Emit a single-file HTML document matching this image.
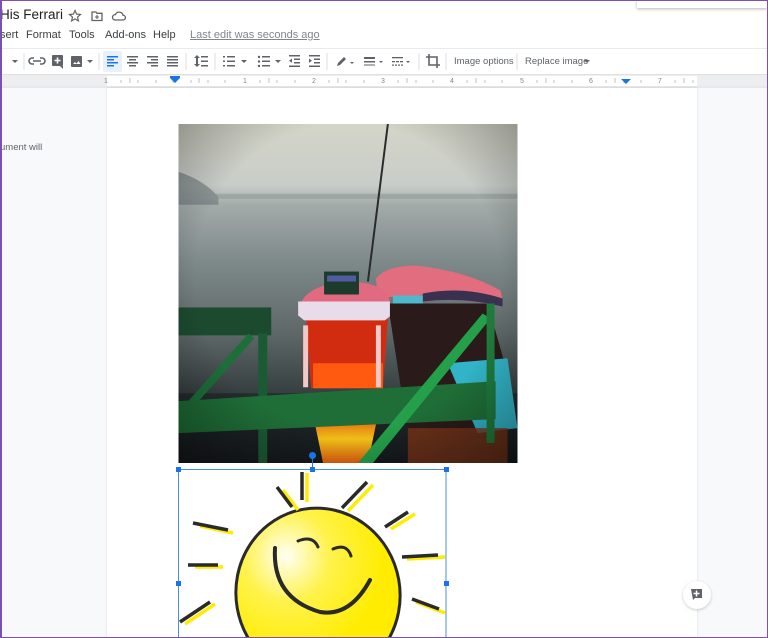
<!DOCTYPE html>
<html><head><meta charset="utf-8"><style>
*{margin:0;padding:0;box-sizing:border-box}
html,body{width:768px;height:638px;overflow:hidden}
body{background:#f8f9fa;font-family:"Liberation Sans",Arial,sans-serif;position:relative}
.abs{position:absolute}
.t{color:#3c4043;font-size:11px}
</style></head><body>
<div class="abs" style="left:0;top:0;width:768px;height:48px;background:#fff"></div>
<div class="abs" style="left:0;top:7px;font-size:13.5px;color:#202124;white-space:nowrap">His Ferrari</div>
<svg class="abs" style="left:68px;top:9px" width="60" height="14" viewBox="0 0 60 14">
<path d="M7 1.5l1.6 3.6 3.9.4-3 2.6.9 3.8L7 9.9 3.6 11.9l.9-3.8-3-2.6 3.9-.4z" fill="none" stroke="#5f6368" stroke-width="1.2"/>
<path d="M24 3h4l1 1.3h5v7.2H24z" fill="none" stroke="#5f6368" stroke-width="1.3"/><path d="M29 6v4M27 8h4" stroke="#5f6368" stroke-width="1.1"/>
<path d="M47 11h8a2.4 2.4 0 0 0 0-4.8 4 4 0 0 0-7.6-.6A2.7 2.7 0 0 0 47 11z" fill="none" stroke="#5f6368" stroke-width="1.3"/>
</svg>
<div class="abs t" style="left:0;top:29px;font-size:11px">
<span style="position:absolute;left:0">sert</span><span style="position:absolute;left:26px">Format</span><span style="position:absolute;left:69px">Tools</span><span style="position:absolute;left:105px;white-space:nowrap">Add-ons</span><span style="position:absolute;left:153px">Help</span>
<span style="position:absolute;left:190px;white-space:nowrap;color:#80868b;text-decoration:underline">Last edit was seconds ago</span></div>
<div class="abs" style="left:637px;top:0;width:130px;height:8px;background:#fff;box-shadow:0 1px 3px rgba(0,0,0,.3)"></div>
<div class="abs" style="left:0;top:48px;width:768px;height:27px;background:#fff;border-top:1px solid #e8eaed;border-bottom:1px solid #e0e0e0"></div>
<svg class="abs" style="left:0;top:49px" width="620" height="25" viewBox="0 0 620 25" fill="#5f6368" stroke="none">
<path d="M12 11l3 3 3-3z"/>
<line x1="24" y1="4" x2="24" y2="21" stroke="#dadce0"/>
<path d="M34 9h-2a3 3 0 0 0 0 6h2M40 9h2a3 3 0 0 1 0 6h-2M33 12h8" fill="none" stroke="#5f6368" stroke-width="1.6"/>
<rect x="52" y="6" width="11" height="11" rx="1"/><path d="M57.5 8.5v6M54.5 11.5h6" stroke="#fff" stroke-width="1.6"/><path d="M60 17l3 3v-3z"/>
<rect x="71" y="7" width="11" height="11" rx="1"/><path d="M73 15l2-2 1.5 1.5 2-2.5 2 3z" fill="#fff"/><path d="M87 11l3 3 3-3z"/>
<line x1="99" y1="4" x2="99" y2="21" stroke="#dadce0"/>
<rect x="103" y="2" width="19" height="21" rx="2" fill="#e8f0fe"/>
<g fill="#1a73e8"><rect x="107" y="7" width="11" height="1.5"/><rect x="107" y="10" width="7" height="1.5"/><rect x="107" y="13" width="11" height="1.5"/><rect x="107" y="16" width="7" height="1.5"/></g>
<rect x="127" y="7" width="11" height="1.5"/><rect x="129" y="10" width="7" height="1.5"/><rect x="127" y="13" width="11" height="1.5"/><rect x="129" y="16" width="7" height="1.5"/>
<rect x="147" y="7" width="11" height="1.5"/><rect x="151" y="10" width="7" height="1.5"/><rect x="147" y="13" width="11" height="1.5"/><rect x="151" y="16" width="7" height="1.5"/>
<rect x="167" y="7" width="11" height="1.5"/><rect x="167" y="10" width="11" height="1.5"/><rect x="167" y="13" width="11" height="1.5"/><rect x="167" y="16" width="11" height="1.5"/>
<line x1="186" y1="4" x2="186" y2="21" stroke="#dadce0"/>
<path d="M197 6l-3 3h2v6h-2l3 3 3-3h-2V9h2z"/><rect x="201" y="7" width="7" height="1.5"/><rect x="201" y="11.5" width="7" height="1.5"/><rect x="201" y="16" width="7" height="1.5"/>
<line x1="215" y1="4" x2="215" y2="21" stroke="#dadce0"/>
<rect x="223" y="7" width="2" height="1.5"/><rect x="223" y="11.5" width="2" height="1.5"/><rect x="223" y="16" width="2" height="1.5"/><rect x="227" y="7" width="8" height="1.5"/><rect x="227" y="11.5" width="8" height="1.5"/><rect x="227" y="16" width="8" height="1.5"/>
<path d="M241 11l3 3 3-3z"/>
<circle cx="259" cy="8" r="1.2"/><circle cx="259" cy="12.5" r="1.2"/><circle cx="259" cy="17" r="1.2"/><rect x="262" y="7" width="8" height="1.5"/><rect x="262" y="11.5" width="8" height="1.5"/><rect x="262" y="16" width="8" height="1.5"/>
<path d="M275 11l3 3 3-3z"/>
<rect x="289" y="6" width="11" height="1.5"/><rect x="294" y="9.5" width="6" height="1.5"/><rect x="294" y="13" width="6" height="1.5"/><rect x="289" y="16.5" width="11" height="1.5"/><path d="M292 9.5l-3 2.2 3 2.2z"/>
<rect x="309" y="6" width="11" height="1.5"/><rect x="314" y="9.5" width="6" height="1.5"/><rect x="314" y="13" width="6" height="1.5"/><rect x="309" y="16.5" width="11" height="1.5"/><path d="M309 9.5l3 2.2-3 2.2z"/>
<line x1="327" y1="4" x2="327" y2="21" stroke="#dadce0"/>
<path d="M337 17l1-3 6-6 2 2-6 6z"/><path d="M350 13l2 2 2-2z"/>
<rect x="364" y="8" width="11" height="2"/><rect x="364" y="12" width="11" height="1.5"/><rect x="364" y="15.5" width="11" height="1"/><path d="M379 12l2 2 2-2z"/>
<rect x="392" y="8" width="11" height="1.3"/><rect x="392" y="12" width="3" height="1.3"/><rect x="396" y="12" width="3" height="1.3"/><rect x="400" y="12" width="3" height="1.3"/><rect x="392" y="15.5" width="2" height="1.2"/><rect x="395" y="15.5" width="2" height="1.2"/><rect x="398" y="15.5" width="2" height="1.2"/><rect x="401" y="15.5" width="2" height="1.2"/><path d="M406 12l2 2 2-2z"/>
<line x1="419" y1="4" x2="419" y2="21" stroke="#dadce0"/>
<path d="M429 5v11h11M426 8h11v11" fill="none" stroke="#5f6368" stroke-width="1.6"/>
<line x1="446" y1="4" x2="446" y2="21" stroke="#dadce0"/>
<line x1="517" y1="4" x2="517" y2="21" stroke="#dadce0"/>
<path d="M584 11l3 3 3-3z"/>
</svg>
<div class="abs" style="left:454px;top:56px;font-size:9.5px;color:#5f6368;white-space:nowrap">Image options</div>
<div class="abs" style="left:525px;top:56px;font-size:9.5px;color:#5f6368;white-space:nowrap">Replace image</div>
<div class="abs" style="left:0;top:75px;width:768px;height:11px;background:#eceef0"></div>
<div class="abs" style="left:107px;top:76px;width:590px;height:10px;background:#fff"></div>
<div class="abs" style="left:0;top:86px;width:768px;height:2px;background:#e6e8eb"></div>
<svg class="abs" style="left:100px;top:76px" width="600" height="10" viewBox="0 0 600 10" font-family="Liberation Sans" font-size="7" fill="#80868b">
<text x="4" y="7">1</text><text x="143" y="7">1</text><text x="212" y="7">2</text><text x="281" y="7">3</text><text x="350" y="7">4</text><text x="420" y="7">5</text><text x="489" y="7">6</text><text x="558" y="7">7</text>
<g stroke="#bdc1c6" stroke-width="1">
<path d="M21 4v3M38 4v3M56 4v3M73 4v3M91 4v3M108 4v3M125 4v3M160 4v3M177 4v3M195 4v3M229 4v3M246 4v3M264 4v3M298 4v3M316 4v3M333 4v3M367 4v3M385 4v3M402 4v3M437 4v3M454 4v3M472 4v3M506 4v3M524 4v3M541 4v3M575 4v3M593 4v3"/>
<path d="M30 2v5M99 2v5M169 2v5M238 2v5M307 2v5M376 2v5M446 2v5M515 2v5M584 2v5"/>
</g>
<path d="M70 2h10l-5 5z" fill="#1a73e8"/><rect x="70" y="0" width="10" height="2" fill="#1a73e8"/>
<path d="M521 3h10l-5 5z" fill="#1a73e8"/>
</svg>
<div class="abs" style="left:0;top:142px;font-size:9.5px;color:#5f6368;white-space:nowrap">ument will</div>
<div class="abs" style="left:107px;top:88px;width:590px;height:550px;background:#fff;box-shadow:0 0 2px rgba(0,0,0,.15)"></div>
<svg class="abs" style="left:178px;top:124px" width="340" height="339" viewBox="0 0 340 340">
<defs>
<linearGradient id="sky" x1="0" y1="0" x2="0" y2="1">
<stop offset="0" stop-color="#d5d5c8"/><stop offset=".18" stop-color="#c8cdc8"/><stop offset=".24" stop-color="#a3aba9"/><stop offset=".4" stop-color="#7f8a8b"/><stop offset=".62" stop-color="#5d6767"/><stop offset=".85" stop-color="#2a3234"/><stop offset="1" stop-color="#1a1e20"/></linearGradient>
<radialGradient id="vig" cx=".5" cy=".45" r=".75"><stop offset=".6" stop-color="#000" stop-opacity="0"/><stop offset="1" stop-color="#000" stop-opacity=".4"/></radialGradient>
<linearGradient id="glow" x1="0" y1="0" x2="0" y2="1"><stop offset="0" stop-color="#d84a10"/><stop offset=".5" stop-color="#f7c818"/><stop offset="1" stop-color="#e86010"/></linearGradient>
</defs>
<rect width="340" height="340" fill="url(#sky)"/>
<path d="M0 48q25 8 40 25l0 8H0z" fill="#6b7478" opacity=".6"/>
<rect x="0" y="70" width="340" height="5" fill="#8a9294" opacity=".5"/>
<path d="M210 0L190 158" stroke="#2b2b2b" stroke-width="2"/>
<rect x="0" y="270" width="340" height="70" fill="#0f1416" opacity=".4"/>
<path d="M210 180h100l20 70-10 60H230z" fill="#2a1a1a"/>
<path d="M270 240l60-5 10 70-40 5z" fill="#32b4c8"/>
<path d="M198 155q10-13 40-13q50 5 85 25l2 10q-40-12-85-5l-40 2z" fill="#e26d7e"/>
<path d="M245 170q40-8 80 5l0 8q-40-10-80-5z" fill="#3a3050"/>
<path d="M215 172h30v8h-30z" fill="#4fb8cc"/>
<path d="M128 195h82l-5 70h-72z" fill="#d22c10"/>
<path d="M135 240h70v25h-70z" fill="#ff5a10"/>
<path d="M122 180q10-20 50-22q38 2 40 20v15h-92z" fill="#e26a80"/>
<path d="M120 178h92v15l-5 4H126l-6-5z" fill="#e8dcea"/>
<path d="M125 202h5v62h-5zM198 202h5v62h-5z" fill="#f2c8c8"/>
<rect x="146" y="148" width="35" height="23" fill="#1d3b2c"/><rect x="149" y="152" width="29" height="6" fill="#6a6ad0" opacity=".7"/>
<path d="M135 292h65l-10 48h-45z" fill="url(#glow)"/>
<rect x="230" y="305" width="100" height="35" fill="#7a3418" opacity=".8"/>
<rect x="0" y="184" width="93" height="28" fill="#1c4a2f"/>
<path d="M80 210h9v130h-9z" fill="#1c5a34"/>
<path d="M8 280L70 210l6 5-62 70z" fill="#1e6e3a"/>
<path d="M0 278l318-20v38L0 310z" fill="#1f6e37"/>
<path d="M180 340L305 190l8 5-118 145z" fill="#25a04a"/>
<path d="M309 180h8v140h-8z" fill="#1f7a3c"/>
<rect width="340" height="340" fill="url(#vig)"/>
</svg>
<svg class="abs" style="left:178px;top:469px" width="269" height="169" viewBox="0 0 269 169">
<defs><radialGradient id="sg" cx=".35" cy=".25" r=".6"><stop offset="0" stop-color="#fffff4"/><stop offset=".45" stop-color="#fff24a"/><stop offset="1" stop-color="#ffec00"/></radialGradient></defs>
<ellipse cx="140" cy="125" rx="82" ry="86" transform="rotate(-10 140 125)" fill="url(#sg)" stroke="#2a2a2a" stroke-width="3"/>
<path d="M97 79q-3 50 45 64q30 5 50-32" fill="none" stroke="#2a2a2a" stroke-width="4" stroke-linecap="round"/>
<path d="M120 72q15-6 20 6M155 80q14-6 18 7" fill="none" stroke="#2a2a2a" stroke-width="3" stroke-linecap="round"/>
<g stroke-width="3.5">
<g stroke="#ffec00"><path d="M129 4v29M105 21l15 20M195 16l-25 26M237 45l-24 15M229 90l38-2M238 133l29 11M22 57l33 7M17 98h28M7 155l30-20"/></g>
<g stroke="#2a2a2a"><path d="M124 3v28M99 18l15 20M189 13l-25 26M230 43l-23 15M224 88l36-2M234 130l27 10M15 54l35 7M10 96h30M2 153l30-20"/></g>
</g>
<path d="M.5 169V.5h267.5V169" fill="none" stroke="#4a90e2" stroke-width="1"/>
</svg>
<div class="abs" style="left:312px;top:456px;width:1px;height:13px;background:#1a73e8"></div>
<div class="abs" style="left:309px;top:452px;width:7px;height:7px;border-radius:50%;background:#1a73e8"></div>
<div class="abs" style="left:176px;top:467px;width:5px;height:5px;background:#1a73e8"></div>
<div class="abs" style="left:310px;top:467px;width:5px;height:5px;background:#1a73e8"></div>
<div class="abs" style="left:444px;top:467px;width:5px;height:5px;background:#1a73e8"></div>
<div class="abs" style="left:176px;top:581px;width:5px;height:5px;background:#1a73e8"></div>
<div class="abs" style="left:444px;top:581px;width:5px;height:5px;background:#1a73e8"></div>
<div class="abs" style="left:683px;top:581px;width:28px;height:28px;border-radius:50%;background:#fff;box-shadow:0 1px 3px rgba(0,0,0,.2)"></div>
<svg class="abs" style="left:691px;top:589px" width="12" height="12" viewBox="0 0 12 12"><path d="M0 0h11v9H4l-2 2z" fill="#5f6368"/><path d="M5.5 1.5v6M2.5 4.5h6" stroke="#fff" stroke-width="1.5"/></svg>
<div class="abs" style="left:0;top:0;width:768px;height:638px;border:1px solid #7e4fb0;border-left-width:2px;pointer-events:none"></div>
</body></html>
